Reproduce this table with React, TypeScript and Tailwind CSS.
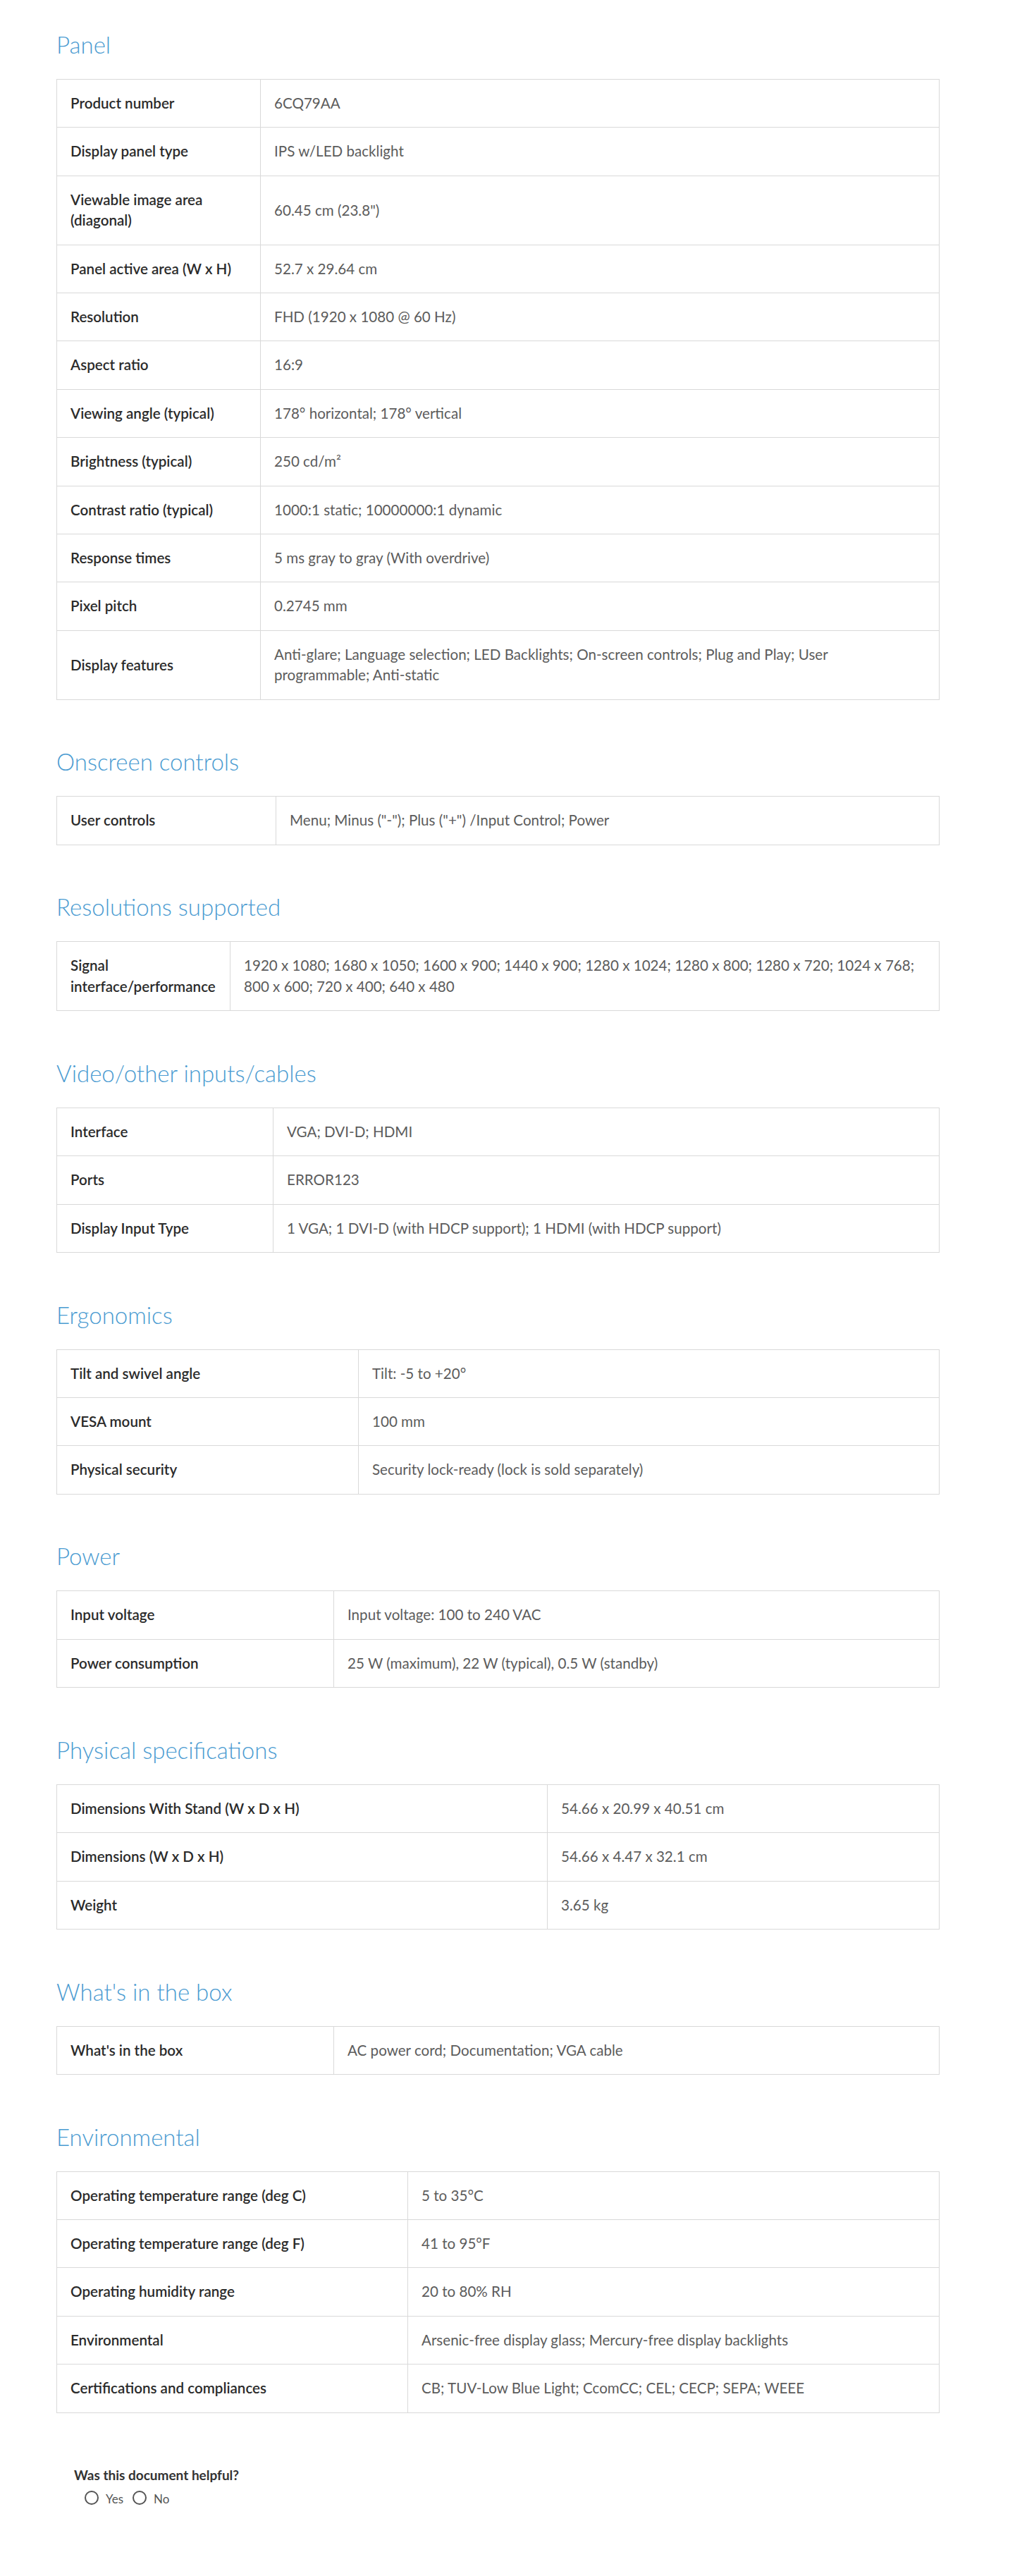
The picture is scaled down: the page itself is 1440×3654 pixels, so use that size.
type Row = { label: string; value: string | string[] };
type Section = { title: string; col: string; rows: Row[] };

const sections: Section[] = [
  {
    title: 'Panel',
    col: 'w-[289px]',
    rows: [
      { label: 'Product number', value: '6CQ79AA' },
      { label: 'Display panel type', value: 'IPS w/LED backlight' },
      { label: 'Viewable image area (diagonal)', value: '60.45 cm (23.8")' },
      { label: 'Panel active area (W x H)', value: '52.7 x 29.64 cm' },
      { label: 'Resolution', value: 'FHD (1920 x 1080 @ 60 Hz)' },
      { label: 'Aspect ratio', value: '16:9' },
      { label: 'Viewing angle (typical)', value: '178° horizontal; 178° vertical' },
      { label: 'Brightness (typical)', value: '250 cd/m²' },
      { label: 'Contrast ratio (typical)', value: '1000:1 static; 10000000:1 dynamic' },
      { label: 'Response times', value: '5 ms gray to gray (With overdrive)' },
      { label: 'Pixel pitch', value: '0.2745 mm' },
      {
        label: 'Display features',
        value: [
          'Anti-glare; Language selection; LED Backlights; On-screen controls; Plug and Play; User',
          'programmable; Anti-static',
        ],
      },
    ],
  },
  {
    title: 'Onscreen controls',
    col: 'w-[311px]',
    rows: [{ label: 'User controls', value: 'Menu; Minus ("-"); Plus ("+") /Input Control; Power' }],
  },
  {
    title: 'Resolutions supported',
    col: 'w-[246px]',
    rows: [
      {
        label: 'Signal interface/performance',
        value: [
          '1920 x 1080; 1680 x 1050; 1600 x 900; 1440 x 900; 1280 x 1024; 1280 x 800; 1280 x 720; 1024 x 768;',
          '800 x 600; 720 x 400; 640 x 480',
        ],
      },
    ],
  },
  {
    title: 'Video/other inputs/cables',
    col: 'w-[307px]',
    rows: [
      { label: 'Interface', value: 'VGA; DVI-D; HDMI' },
      { label: 'Ports', value: 'ERROR123' },
      { label: 'Display Input Type', value: '1 VGA; 1 DVI-D (with HDCP support); 1 HDMI (with HDCP support)' },
    ],
  },
  {
    title: 'Ergonomics',
    col: 'w-[428px]',
    rows: [
      { label: 'Tilt and swivel angle', value: 'Tilt: -5 to +20°' },
      { label: 'VESA mount', value: '100 mm' },
      { label: 'Physical security', value: 'Security lock-ready (lock is sold separately)' },
    ],
  },
  {
    title: 'Power',
    col: 'w-[393px]',
    rows: [
      { label: 'Input voltage', value: 'Input voltage: 100 to 240 VAC' },
      { label: 'Power consumption', value: '25 W (maximum), 22 W (typical), 0.5 W (standby)' },
    ],
  },
  {
    title: 'Physical specifications',
    col: 'w-[696px]',
    rows: [
      { label: 'Dimensions With Stand (W x D x H)', value: '54.66 x 20.99 x 40.51 cm' },
      { label: 'Dimensions (W x D x H)', value: '54.66 x 4.47 x 32.1 cm' },
      { label: 'Weight', value: '3.65 kg' },
    ],
  },
  {
    title: "What's in the box",
    col: 'w-[393px]',
    rows: [{ label: "What's in the box", value: 'AC power cord; Documentation; VGA cable' }],
  },
  {
    title: 'Environmental',
    col: 'w-[498px]',
    rows: [
      { label: 'Operating temperature range (deg C)', value: '5 to 35°C' },
      { label: 'Operating temperature range (deg F)', value: '41 to 95°F' },
      { label: 'Operating humidity range', value: '20 to 80% RH' },
      { label: 'Environmental', value: 'Arsenic-free display glass; Mercury-free display backlights' },
      { label: 'Certifications and compliances', value: 'CB; TUV-Low Blue Light; CcomCC; CEL; CECP; SEPA; WEEE' },
    ],
  },
];

function SpecTable({ section }: { section: Section }) {
  return (
    <section>
      <h2 className="mb-[27px] text-[33px] font-light leading-[44px] text-[#4a9bd1]">{section.title}</h2>
      <table className="w-full table-fixed border-collapse">
        <colgroup>
          <col className={section.col} />
          <col />
        </colgroup>
        <tbody>
          {section.rows.map((row) => (
            <tr key={row.label}>
              <td className="border border-[#d9d9d9] px-[19px] py-[19px] align-middle text-[20.6px] font-semibold leading-[29.4px] text-[#2b2b2b]">
                {row.label}
              </td>
              <td className="border border-[#d9d9d9] px-[19px] py-[19px] align-middle text-[20.6px] leading-[29.4px] text-[#5c5c5c]">
                {Array.isArray(row.value)
                  ? row.value.map((line) => (
                      <span key={line} className="block">
                        {line}
                      </span>
                    ))
                  : row.value}
              </td>
            </tr>
          ))}
        </tbody>
      </table>
    </section>
  );
}

function Feedback() {
  return (
    <div className="ml-[25px] mt-[76px]">
      <div className="text-[19px] font-bold leading-[24px] text-[#333]">Was this document helpful?</div>
      <div className="ml-[15px] mt-[6px] flex items-center text-[17px] leading-[24px] text-[#555]">
        <label className="flex items-center">
          <input
            type="radio"
            name="helpful"
            className="h-[20px] w-[20px] appearance-none rounded-full border-2 border-[#555] bg-white"
          />
          <span className="ml-[10px] mt-[4px]">Yes</span>
        </label>
        <label className="ml-[13px] flex items-center">
          <input
            type="radio"
            name="helpful"
            className="h-[20px] w-[20px] appearance-none rounded-full border-2 border-[#555] bg-white"
          />
          <span className="ml-[10px] mt-[4px]">No</span>
        </label>
      </div>
    </div>
  );
}

export default function App() {
  return (
    <div className="min-h-[3654px] bg-white font-['Lato','Liberation_Sans',sans-serif]">
      <div className="ml-[80px] w-[1253px] pt-[41px]">
        <div className="flex flex-col gap-[65.6px]">
          {sections.map((s) => (
            <SpecTable key={s.title} section={s} />
          ))}
        </div>
        <Feedback />
      </div>
    </div>
  );
}
